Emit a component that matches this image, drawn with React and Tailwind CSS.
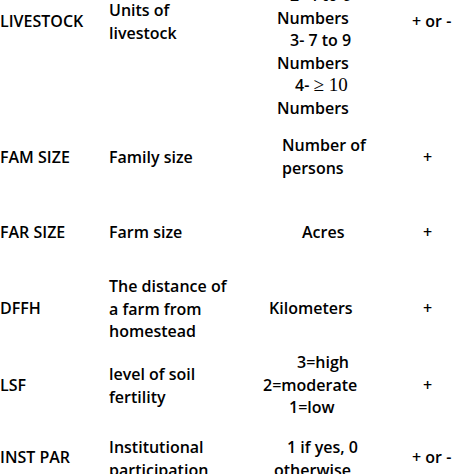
import React from "react";

const rows = [
  {
    h: "h-[150px]",
    code: "LIVESTOCK",
    codeTop: "mt-[26px]",
    desc: ["Units of", "livestock"],
    descTop: "mt-[15px]",
    unit: [
      ["2- 4 to 6", "pl-[27px]"],
      ["Numbers", "pl-[14px]"],
      ["3- 7 to 9", "pl-[27px]"],
      ["Numbers", "pl-[14px]"],
      ["GE", "pl-[32px]"],
      ["Numbers", "pl-[14px]"],
    ],
    unitTop: "mt-0",
    sign: "+ or -",
    signTop: "mt-[26px]",
  },
  {
    h: "h-[87px]",
    code: "FAM SIZE",
    codeTop: "mt-[12px]",
    desc: ["Family size"],
    descTop: "mt-[12px]",
    unit: [
      ["Number of", "pl-[19px]"],
      ["persons", "pl-[19px]"],
    ],
    unitTop: "mt-0",
    sign: "+",
    signTop: "mt-[12px]",
  },
  {
    h: "h-[54px]",
    code: "FAR SIZE",
    codeTop: "mt-0",
    desc: ["Farm size"],
    descTop: "mt-0",
    unit: [["Acres", "pl-[39px]"]],
    unitTop: "mt-0",
    sign: "+",
    signTop: "mt-0",
  },
  {
    h: "h-[76px]",
    code: "DFFH",
    codeTop: "mt-[22px]",
    desc: ["The distance of", "a farm from", "homestead"],
    descTop: "mt-0",
    unit: [["Kilometers", "pl-[6px]"]],
    unitTop: "mt-[22px]",
    sign: "+",
    signTop: "mt-[22px]",
  },
  {
    h: "h-[85px]",
    code: "LSF",
    codeTop: "mt-[23px]",
    desc: ["level of soil", "fertility"],
    descTop: "mt-[12px]",
    unit: [
      ["3=high", "pl-[34px]"],
      ["2=moderate", "pl-0"],
      ["1=low", "pl-[26px]"],
    ],
    unitTop: "mt-0",
    sign: "+",
    signTop: "mt-[23px]",
  },
  {
    h: "h-[60px]",
    code: "INST PAR",
    codeTop: "mt-[10px]",
    desc: ["Institutional", "participation"],
    descTop: "mt-0",
    unit: [
      ["1 if yes, 0", "pl-[24px]"],
      ["otherwise", "pl-[11px]"],
    ],
    unitTop: "mt-0",
    sign: "+ or -",
    signTop: "mt-[10px]",
  },
];

const Row = ({ r }) => (
  <div className={`flex items-start shrink-0 ${r.h}`}>
    <div className={`w-[109px] shrink-0 whitespace-nowrap ${r.codeTop}`}>{r.code}</div>
    <div className={`w-[154px] shrink-0 ${r.descTop}`}>
      {r.desc.map((d, i) => (
        <div key={i} className="whitespace-nowrap">{d}</div>
      ))}
    </div>
    <div className={`w-[130px] shrink-0 ${r.unitTop}`}>
      {r.unit.map(([t, pl], i) => (
        <div key={i} className={`whitespace-nowrap ${pl}`}>
          {t === "GE" ? (
            <>
              4-{" "}
              <span className="font-normal text-[19px] leading-[20px] [font-family:'Liberation_Serif',serif]">≥ 10</span>
            </>
          ) : (
            t
          )}
        </div>
      ))}
    </div>
    <div className={`shrink-0 whitespace-nowrap ${r.signTop} ${r.sign === "+" ? "pl-[30px]" : "pl-[19px]"}`}>
      {r.sign}
    </div>
  </div>
);

export default function App() {
  return (
    <div className="w-[474px] h-[474px] overflow-hidden bg-white text-black">
      <div className="flex flex-col pt-px -translate-y-[17px] text-[16px] leading-[22.5px] font-semibold [font-family:'Open_Sans',sans-serif]">
        {rows.map((r, i) => (
          <Row key={i} r={r} />
        ))}
      </div>
    </div>
  );
}
